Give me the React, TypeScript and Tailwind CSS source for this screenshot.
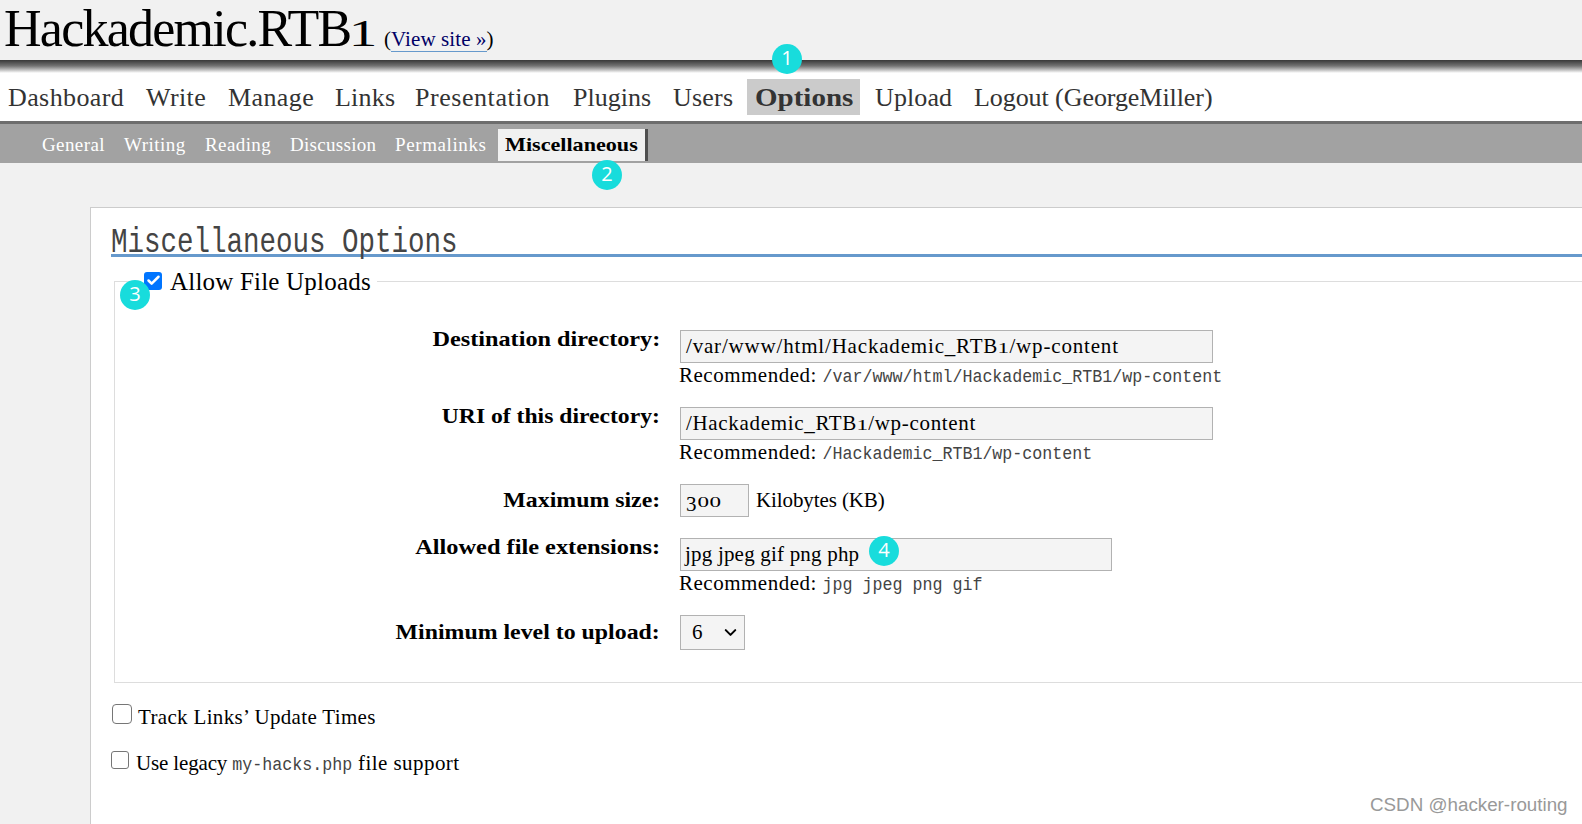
import type { ReactNode } from 'react'
import { Check, ChevronDown } from 'lucide-react'

const mainMenu = [
  { label: 'Dashboard', cell: 'w-[138px]', text: 'tracking-[0.4px]' },
  { label: 'Write', cell: 'w-[82px]', text: 'tracking-[0.4px]' },
  { label: 'Manage', cell: 'w-[107px]', text: 'tracking-[0.4px]' },
  { label: 'Links', cell: 'w-[80px]', text: 'tracking-[0.2px]' },
  { label: 'Presentation', cell: 'w-[158px]', text: 'tracking-[0.55px]' },
  { label: 'Plugins', cell: 'w-[100px]', text: 'tracking-[0px]' },
  { label: 'Users', cell: 'w-[82px]', text: 'tracking-[0.2px]' },
  { label: 'Options', cell: 'w-[120px]', text: '', current: true },
  { label: 'Upload', cell: 'w-[99px]', text: 'tracking-[0.1px]' },
  { label: 'Logout (GeorgeMiller)', cell: 'w-[260px]', text: 'tracking-[-0.07px]' },
]

const subMenu = [
  { label: 'General', cell: 'w-[82px]', text: 'tracking-[0.4px]' },
  { label: 'Writing', cell: 'w-[81px]', text: 'tracking-[0.5px]' },
  { label: 'Reading', cell: 'w-[85px]', text: 'tracking-[0.4px]' },
  { label: 'Discussion', cell: 'w-[105px]', text: 'tracking-[0.3px]' },
  { label: 'Permalinks', cell: 'w-[103px]', text: 'tracking-[0.6px]' },
]

function Marker({ n, className }: { n: number; className: string }) {
  return (
    <span
      className={`absolute z-10 flex size-[30px] items-center justify-center rounded-full bg-[#18dcdc] pb-[3px] font-['Open_Sans',sans-serif] text-[20px] leading-none font-normal tracking-normal text-white ${className}`}
    >
      {n}
    </span>
  )
}

function Code({ children }: { children: ReactNode }) {
  return (
    <code className="inline-block origin-[50%_75%] scale-y-[1.12] font-['Liberation_Mono',monospace] text-[16.67px] leading-6 tracking-normal text-[#444]">
      {children}
    </code>
  )
}

// bold text runs wide
function Bold({ className, children }: { className: string; children: ReactNode }) {
  return <span className={`inline-block font-bold tracking-normal whitespace-nowrap ${className}`}>{children}</span>
}

// old-style figures sit at x-height
function Small({ children }: { children: ReactNode }) {
  return <span className="inline-block origin-[50%_80%] scale-x-[1.1] scale-y-[0.74]">{children}</span>
}

function Field({ className, children }: { className: string; children: ReactNode }) {
  return (
    <div className={`flex h-[33px] items-center border border-[#b2b2b2] bg-[#f4f4f4] px-[5px] pb-px ${className}`}>
      <span className="whitespace-nowrap">{children}</span>
    </div>
  )
}

function Row({ label, offset, stretch, children }: { label: string; offset: string; stretch: string; children: ReactNode }) {
  return (
    <div className="flex items-start">
      <div className={`w-[545px] text-right ${offset}`}>
        <Bold className={`origin-right ${stretch}`}>{label}</Bold>
      </div>
      <div className="ml-5">{children}</div>
    </div>
  )
}

function Recommended({ children }: { children: ReactNode }) {
  return (
    <p className="-ml-px h-6 whitespace-nowrap">
      <span className="tracking-[0.5px]">Recommended:</span> <Code>{children}</Code>
    </p>
  )
}

export default function App() {
  return (
    <div className="h-[824px] w-[1582px] overflow-hidden bg-[#f1f1f1] font-['Liberation_Serif',serif] text-[21px] leading-6 tracking-[0.4px] text-black">
      <header className="flex h-[60px] items-baseline pl-[4px] whitespace-nowrap">
        <h1 className="w-[371px] text-[52px] leading-[58px] tracking-[-1.75px]">
          Hackademic.RTB<Small>1</Small>
        </h1>
        <span className="ml-[9px] tracking-[0.1px]">
          (<a className="border-b border-[#6699cc] text-[#000066]">View site »</a>)
        </span>
      </header>

      {/* Main menu */}
      <nav className="relative h-16 border-b-[3px] border-[#6d6d6d] bg-white">
        <div className="h-[13px] bg-linear-to-b from-[#393939] via-[#737373] via-45% to-white" />
        <ul className="flex pt-[6px] text-[26px] leading-9 whitespace-nowrap text-[#333]">
          {mainMenu.map((item) => (
            <li key={item.label} className={item.cell}>
              {item.current ? (
                <a className="block h-9 w-[113px] bg-[#cbcbcb] pt-px pl-2">
                  <Bold className="origin-left scale-x-[1.115]">{item.label}</Bold>
                </a>
              ) : (
                <a className={`block pt-px pl-2 ${item.text}`}>{item.label}</a>
              )}
            </li>
          ))}
        </ul>
        <Marker n={1} className="-top-4 left-[772px]" />
      </nav>

      {/* Sub menu */}
      <nav className="relative flex h-[39px] bg-[#a2a2a2] pt-[5px] pl-[42px] text-[19px] leading-8 whitespace-nowrap text-white">
        {subMenu.map((item) => (
          <a key={item.label} className={`${item.cell} ${item.text}`}>
            {item.label}
          </a>
        ))}
        <a className="h-8 w-[150px] border-r-[3px] border-[#4f4f4f] bg-[#f1f1f1] pl-[7px] text-black">
          <Bold className="origin-left scale-x-[1.165]">Miscellaneous</Bold>
        </a>
        <Marker n={2} className="top-9 left-[592px]" />
      </nav>

      {/* Options panel, runs past the right edge */}
      <main className="relative mt-11 ml-[90px] h-[640px] w-[1520px] border border-[#ccc] bg-white pt-4 pl-5">
        <h2 className="h-[33px] border-b-[3px] border-[#6699cc] font-['Liberation_Mono',monospace] text-[27.5px] leading-[30px] tracking-normal whitespace-nowrap text-[#444]">
          <span className="inline-block origin-[50%_78%] translate-y-[6px] scale-y-[1.25]">Miscellaneous Options</span>
        </h2>

        <section className="mt-6 ml-[3px] h-[402px] border border-[#ddd]">
          <div className="-mt-[15px] ml-[22px] flex h-[30px] w-[240px] items-center bg-white pl-[7px]">
            <span className="-mt-[3px] flex size-[18px] items-center justify-center rounded-[3px] bg-[#0075ff]">
              <Check className="size-[15px] text-white" strokeWidth={4} />
            </span>
            <span className="ml-2 text-[25px] tracking-[0.2px] whitespace-nowrap">Allow File Uploads</span>
          </div>

          <div className="mt-[33px] flex flex-col gap-5">
            <Row label="Destination directory:" offset="-mt-[3px]" stretch="scale-x-[1.155]">
              <Field className="w-[533px] tracking-[0.82px]">
                /var/www/html/Hackademic_RTB<Small>1</Small>/wp-content
              </Field>
              <Recommended>/var/www/html/Hackademic_RTB1/wp-content</Recommended>
            </Row>
            <Row label="URI of this directory:" offset="-mt-[3px]" stretch="scale-x-[1.125]">
              <Field className="w-[533px] tracking-[0.68px]">
                /Hackademic_RTB<Small>1</Small>/wp-content
              </Field>
              <Recommended>/Hackademic_RTB1/wp-content</Recommended>
            </Row>
            <Row label="Maximum size:" offset="mt-[4px]" stretch="scale-x-[1.135]">
              <div className="flex h-[34px] items-start">
                <Field className="w-[69px] tracking-[1.6px]">
                  <span className="relative top-1">3</span>
                  <Small>0</Small>
                  <Small>0</Small>
                </Field>
                <span className="mt-[4px] ml-[7px] tracking-[-0.1px]">Kilobytes (KB)</span>
              </div>
            </Row>
            <Row label="Allowed file extensions:" offset="-mt-[3px]" stretch="scale-x-[1.16]">
              <Field className="w-[432px] pl-[4px] tracking-[0.2px]">jpg jpeg gif png php</Field>
              <Recommended>jpg jpeg png gif</Recommended>
            </Row>
            <Row label="Minimum level to upload:" offset="mt-[5px]" stretch="scale-x-[1.135]">
              <div className="flex h-[35px] w-[65px] items-center justify-between border border-[#b2b2b2] bg-[#f4f4f4] pr-[4px] pb-px pl-[11px]">
                6
                <ChevronDown className="size-[19px]" strokeWidth={2.6} />
              </div>
            </Row>
          </div>
        </section>

        <label className="mt-[21px] ml-px flex h-[25px] items-start">
          <span className="size-5 rounded-[4px] border-[1.5px] border-[#767676] bg-white" />
          <span className="mt-px ml-[6px] tracking-[0.34px]">Track Links’ Update Times</span>
        </label>
        <label className="mt-[21px] flex h-[25px] items-start whitespace-pre">
          <span className="mt-px size-[18px] rounded-[3px] border-[1.5px] border-[#767676] bg-white" />
          <span className="mt-px ml-[7px] tracking-[-0.15px]">
            Use legacy <Code>my-hacks.php</Code>
            <span className="tracking-[0.45px]"> file support</span>
          </span>
        </label>

        <Marker n={3} className="top-[72px] left-[29px]" />
        <Marker n={4} className="top-[328px] left-[778px]" />
        <span className="absolute top-[585px] left-[1279px] font-['Liberation_Sans',sans-serif] text-[18.8px] tracking-normal whitespace-nowrap text-[#999]">
          CSDN @hacker-routing
        </span>
      </main>
    </div>
  )
}
